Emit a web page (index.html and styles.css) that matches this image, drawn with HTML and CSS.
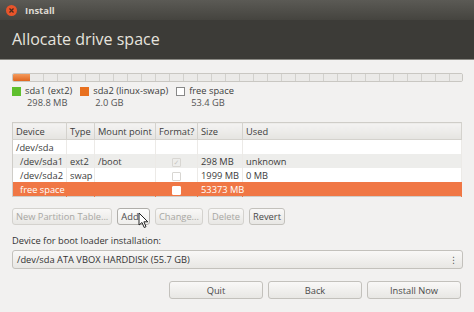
FILE: index.html
```html
<!DOCTYPE html>
<html lang="en">
<head>
    <meta charset="UTF-8">
    <title>Install</title>
    <link rel="stylesheet" href="styles.css">
</head>
<body>
    <div class="window">
        <div class="titlebar">
            <span class="close">
                <svg width="11" height="11" viewBox="0 0 11 11">
                    <circle cx="5.5" cy="5.5" r="5.5" fill="#e8542a"/>
                    <path d="M3.5 3.5 L7.5 7.5 M7.5 3.5 L3.5 7.5" stroke="#4a2a1c" stroke-width="1.3"/>
                </svg>
            </span>
            <span class="title">Install</span>
        </div>
        <div class="header">
            <h1>Allocate drive space</h1>
        </div>
        <div class="content">
            <div class="partbar">
                <div class="part-swap"></div>
                <div class="part-free"></div>
            </div>
            <div class="legend">
                <div class="legend-item">
                    <span class="swatch green"></span>
                    <div>
                        <div>sda1 (ext2)</div>
                        <div class="legend-size">298.8 MB</div>
                    </div>
                </div>
                <div class="legend-item">
                    <span class="swatch orange"></span>
                    <div>
                        <div>sda2 (linux-swap)</div>
                        <div class="legend-size">2.0 GB</div>
                    </div>
                </div>
                <div class="legend-item">
                    <span class="swatch white"></span>
                    <div>
                        <div>free space</div>
                        <div class="legend-size">53.4 GB</div>
                    </div>
                </div>
            </div>

            <table class="parts">
                <thead>
                    <tr>
                        <th class="c-dev">Device</th>
                        <th class="c-type">Type</th>
                        <th class="c-mount">Mount point</th>
                        <th class="c-fmt">Format?</th>
                        <th class="c-size">Size</th>
                        <th>Used</th>
                    </tr>
                </thead>
                <tbody>
                    <tr>
                        <td>/dev/sda</td><td></td><td></td><td></td><td></td><td></td>
                    </tr>
                    <tr class="odd">
                        <td class="indent">/dev/sda1</td><td>ext2</td><td>/boot</td>
                        <td class="check"><span class="box checked">&#10003;</span></td>
                        <td>298 MB</td><td>unknown</td>
                    </tr>
                    <tr>
                        <td class="indent">/dev/sda2</td><td>swap</td><td></td>
                        <td class="check"><span class="box"></span></td>
                        <td>1999 MB</td><td>0 MB</td>
                    </tr>
                    <tr class="selected">
                        <td class="indent">free space</td><td></td><td></td>
                        <td class="check"><span class="box sel"></span></td>
                        <td>53373 MB</td><td></td>
                    </tr>
                </tbody>
            </table>

            <div class="actions">
                <button class="btn disabled">New Partition Table...</button>
                <button class="btn hover">Add...</button>
                <button class="btn disabled">Change...</button>
                <button class="btn disabled">Delete</button>
                <button class="btn">Revert</button>
                <svg class="cursor" width="12" height="17" viewBox="0 0 12 17">
                    <path d="M1 1 L1 13 L4 10.5 L6.2 15.5 L8 14.7 L5.9 9.8 L9.8 9.8 Z" fill="#fff" stroke="#222" stroke-width="1"/>
                </svg>
            </div>

            <div class="boot-label">Device for boot loader installation:</div>
            <div class="combo">
                <span>/dev/sda ATA VBOX HARDDISK (55.7 GB)</span>
                <span class="arrows">&#8942;</span>
            </div>

            <div class="footer">
                <button class="btn wide">Quit</button>
                <button class="btn wide">Back</button>
                <button class="btn wide">Install Now</button>
            </div>
        </div>
    </div>
</body>
</html>
```

FILE: styles.css
```css
body {
    margin: 0;
    background-color: #f2f1f0;
    font-family: "Open Sans", "DejaVu Sans", sans-serif;
    font-size: 9.3px;
    color: #3c3c3c;
}
.window {
    width: 474px;
    height: 312px;
    overflow: hidden;
}
.titlebar {
    height: 20px;
    display: flex;
    align-items: center;
    gap: 8px;
    padding-left: 6px;
    background: linear-gradient(#5b5a55, #45443f);
}
.close {
    display: flex;
}
.title {
    color: #dfdbd2;
    font-weight: bold;
    font-size: 9.5px;
}
.header {
    height: 39px;
    background-color: #3c3b37;
    border-bottom: 1px solid #8a8983;
    display: flex;
    align-items: center;
    padding-left: 12px;
}
.header h1 {
    margin: 0;
    font-weight: normal;
    font-size: 16px;
    color: #e6e3de;
    padding-bottom: 1px;
}
.content {
    padding: 0 12px;
}
.partbar {
    margin-top: 13px;
    height: 7px;
    width: 449px;
    display: flex;
    border: 1px solid #c9c7c2;
    border-radius: 2px;
    overflow: hidden;
}
.part-swap {
    width: 17px;
    background: linear-gradient(#f49a5c, #e0661f);
}
.part-free {
    flex: 1;
    background: repeating-linear-gradient(90deg, #ebeae8 0, #ebeae8 13px, #d2d1cd 13px, #d2d1cd 14px);
}
.legend {
    display: flex;
    margin-top: 3px;
    line-height: 12px;
}
.legend-item {
    display: flex;
    gap: 4px;
    margin-right: 8px;
}
.legend-size {
    padding-left: 2px;
    color: #555;
}
.swatch {
    width: 7px;
    height: 7px;
    margin-top: 2px;
    border: 1px solid transparent;
}
.swatch.green {
    background-color: #5fbf2e;
}
.swatch.orange {
    background-color: #e8701f;
}
.swatch.white {
    background-color: #fff;
    border-color: #888;
}
.parts {
    margin-top: 13px;
    width: 450px;
    border-collapse: collapse;
    border: 1px solid #cfcdc8;
    background-color: #fff;
    table-layout: fixed;
}
.parts th {
    font-weight: normal;
    text-align: left;
    height: 16px;
    padding: 0 3px;
    background: linear-gradient(#f4f3f2, #e5e4e1);
    border-right: 1px solid #d4d2cd;
    border-bottom: 1px solid #d4d2cd;
    white-space: nowrap;
}
.parts td {
    height: 14px;
    padding: 0 3px;
    border-right: 1px solid #eceae7;
    white-space: nowrap;
}
.c-dev { width: 47px; }
.c-type { width: 21px; }
.c-mount { width: 54px; }
.c-fmt { width: 35px; }
.c-size { width: 38px; }
.parts td.indent {
    padding-left: 7px;
}
.parts tr.odd td {
    background-color: #ededeb;
}
.parts tr.selected td {
    background-color: #f07745;
    color: #fff;
    border-right-color: #f07745;
}
.check {
    text-align: center;
}
.box {
    display: inline-block;
    width: 7px;
    height: 7px;
    border: 1px solid #d8d6d2;
    border-radius: 1px;
    font-size: 7px;
    line-height: 7px;
    color: #c8c6c2;
    vertical-align: middle;
}
.box.sel {
    background-color: #fff;
    border-color: #fff;
}
.actions {
    display: flex;
    align-items: center;
    gap: 5px;
    margin-top: 11px;
    position: relative;
}
.btn {
    font-family: inherit;
    font-size: 9.3px;
    height: 17px;
    padding: 0 3px;
    border: 1px solid #c3c1bc;
    border-radius: 3px;
    background: linear-gradient(#f9f8f7, #e8e7e4);
    color: #4a4a4a;
}
.btn.disabled {
    color: #a8a7a3;
    border-color: #d4d2ce;
}
.btn.hover {
    background: linear-gradient(#fdfdfc, #efeeec);
    border-color: #b0aeaa;
}
.cursor {
    position: absolute;
    left: 126px;
    top: 4px;
}
.boot-label {
    margin-top: 9px;
    color: #333;
}
.combo {
    margin-top: 3px;
    height: 17px;
    width: 441px;
    display: flex;
    justify-content: space-between;
    align-items: center;
    padding: 0 4px;
    border: 1px solid #c3c1bc;
    border-radius: 3px;
    background: linear-gradient(#f9f8f7, #e8e7e4);
    color: #333;
}
.arrows {
    font-size: 9px;
    color: #555;
}
.footer {
    display: flex;
    justify-content: flex-end;
    gap: 5px;
    margin-top: 12px;
    width: 449px;
}
.btn.wide {
    width: 94px;
    height: 18px;
}
```
